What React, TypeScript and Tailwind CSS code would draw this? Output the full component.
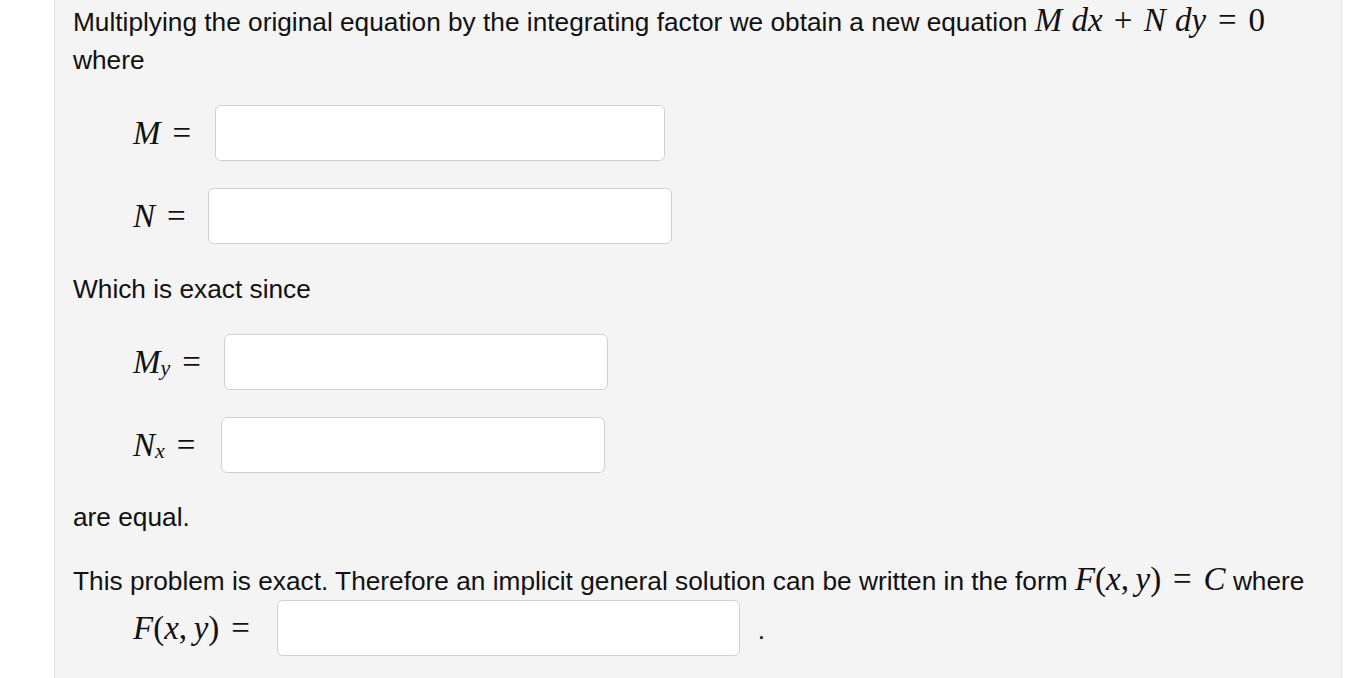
import React from "react";

const mathCls = "font-['Liberation_Serif',serif] text-[33px] leading-none";

function V({ children }: { children: React.ReactNode }) {
  return <i className="italic">{children}</i>;
}

function Eq() {
  return <span className="mx-[0.36em] not-italic">=</span>;
}

function AnswerRow({
  label,
  width,
  gap = 18,
  mt = "mt-[26px]",
  after,
}: {
  label: React.ReactNode;
  width: string;
  gap?: number;
  mt?: string;
  after?: React.ReactNode;
}) {
  return (
    <div className={`${mt} flex h-[56px] items-center pl-[60px]`}>
      <span className={`${mathCls} flex items-center whitespace-nowrap`}>{label}</span>
      <input
        type="text"
        style={{ marginLeft: gap }}
        className={`h-[56px] ${width} rounded-[6px] border border-[#d0d0d0] bg-white outline-none`}
      />
      {after}
    </div>
  );
}

export default function App() {
  return (
    <div className="h-[678px] overflow-hidden bg-white">
      <div className="ml-[54px] h-full w-[1288px] border-x border-[#e2e2e2] bg-[#f4f4f4] pl-[18px] pt-[3px] font-['Liberation_Sans',Arial,sans-serif] text-[26.25px] leading-[38px] text-[#111]">
        <p>
          Multiplying the original equation by the integrating factor we obtain a new equation{" "}
          <span className={mathCls}>
            <V>M</V>
            <span className="ml-[0.28em]">
              <V>dx</V>
            </span>
            <span className="mx-[0.34em]">+</span>
            <V>N</V>
            <span className="ml-[0.28em]">
              <V>dy</V>
            </span>
            <Eq />0
          </span>
          <br />
          where
        </p>

        <AnswerRow
          label={
            <>
              <V>M</V>
              <Eq />
            </>
          }
          width="w-[450px]"
          gap={12}
        />
        <AnswerRow
          mt="mt-[27px]"
          label={
            <>
              <V>N</V>
              <Eq />
            </>
          }
          width="w-[464px]"
          gap={11}
        />

        <p className="mt-[26px]">Which is exact since</p>

        <AnswerRow
          mt="mt-[26px]"
          label={
            <>
              <V>M</V>
              <sub className="relative top-[6px] text-[22px] italic">y</sub>
              <Eq />
            </>
          }
          width="w-[384px]"
          gap={11}
        />
        <AnswerRow
          mt="mt-[27px]"
          label={
            <>
              <V>N</V>
              <sub className="relative top-[6px] text-[22px] italic">x</sub>
              <Eq />
            </>
          }
          width="w-[384px]"
          gap={14}
        />

        <p className="mt-[25px]">are equal.</p>

        <p className="mt-[26px]">
          This problem is exact. Therefore an implicit general solution can be written in the form{" "}
          <span className={mathCls}>
            <V>F</V>(<V>x</V>,<span className="ml-[0.2em]"><V>y</V></span>)<Eq />
            <V>C</V>
          </span>{" "}
          where
        </p>

        <AnswerRow
          mt="mt-0"
          label={
            <>
              <V>F</V>(<V>x</V>,<span className="ml-[0.2em]"><V>y</V></span>)<Eq />
            </>
          }
          width="w-[463px]"
          gap={15}
          after={<span className="ml-[18px] pt-[4px]">.</span>}
        />
      </div>
    </div>
  );
}
